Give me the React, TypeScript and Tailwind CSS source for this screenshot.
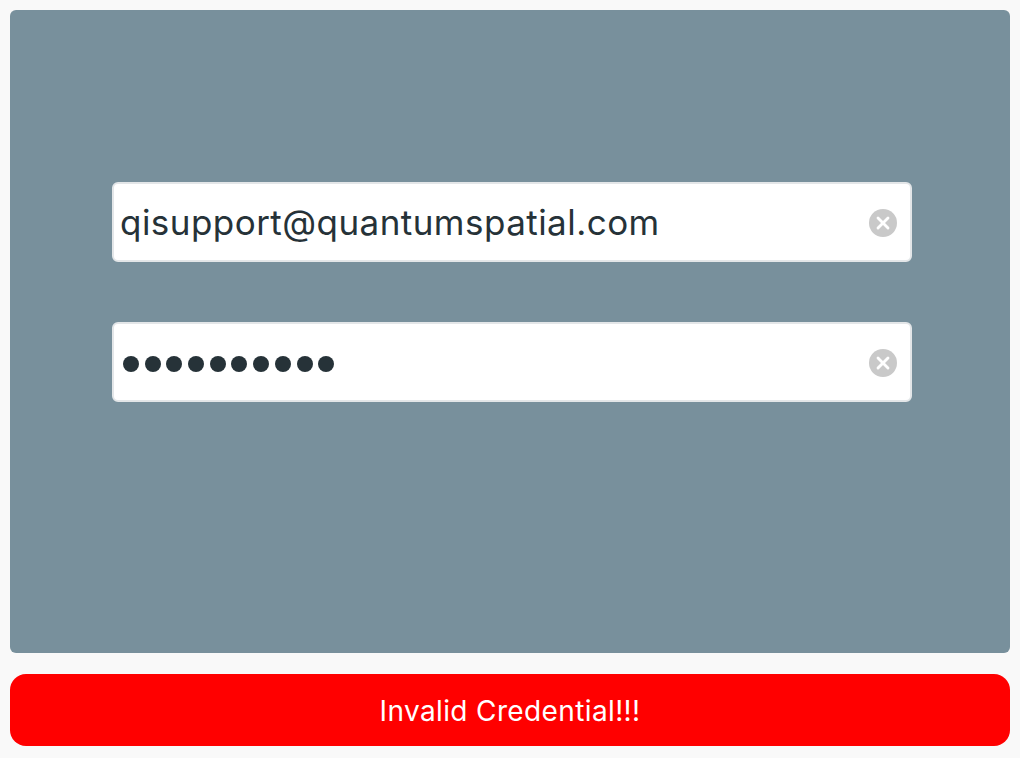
import { X } from 'lucide-react'

const DOTS = Array.from({ length: 10 })

function ClearButton() {
  return (
    <span className="ml-auto mt-[1px] flex h-7 w-7 shrink-0 items-center justify-center rounded-full bg-[#c9c9c9]">
      <X className="h-5 w-5 text-white" strokeWidth={3.4} aria-hidden />
    </span>
  )
}

function Field({ children }: { children: React.ReactNode }) {
  return (
    <div className="flex h-20 w-[800px] items-center rounded-[6px] border-2 border-[#e3e6e8] bg-white pl-[6px] pr-[13px]">
      {children}
      <ClearButton />
    </div>
  )
}

export default function App() {
  return (
    <div className="flex h-[758px] w-[1020px] flex-col bg-[#f9f9f9] px-[10px] pt-[10px] font-['Inter',sans-serif]">
      <div className="flex h-[643px] flex-col items-center gap-[60px] rounded-[6px] bg-[#78909c] pl-[4px] pt-[172px]">
        <Field>
          <span className="text-[35px] leading-none tracking-[0.46px] text-[#263238]">qisupport@quantumspatial.com</span>
        </Field>
        <Field>
          <span className="ml-[3px] mt-[3px] flex gap-[5.7px]">
            {DOTS.map((_, i) => (
              <span key={i} className="h-4 w-4 rounded-full bg-[#263238]" />
            ))}
          </span>
        </Field>
      </div>
      <div className="mt-[21px] flex h-[72px] items-center justify-center rounded-[16px] bg-[#ff0000] pt-[2px] text-[28px] tracking-[0.38px] text-white">
        Invalid Credential!!!
      </div>
    </div>
  )
}
